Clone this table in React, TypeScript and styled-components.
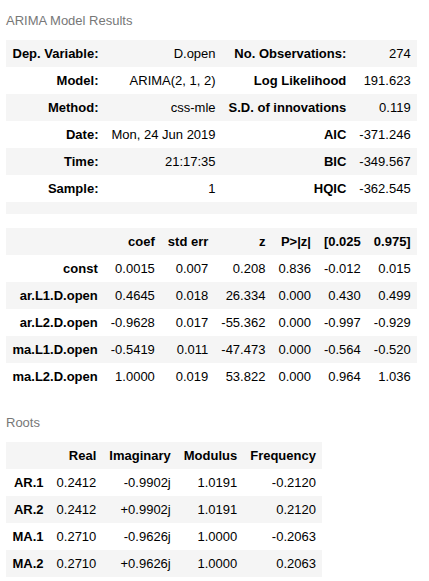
import React from "react"
import styled, { createGlobalStyle } from "styled-components"

const GlobalStyle = createGlobalStyle`
  body {
    margin: 0;
    background: #fff;
    color: #000;
    font-family: "Liberation Sans", Arial, sans-serif;
    font-size: 13px;
  }
`

const OutputArea = styled.div`
  display: flex;
  flex-direction: column;
  align-items: flex-start;
  padding-left: 6px;
`

const StatsTable = styled.table<{ gap: number }>`
  margin-top: ${({ gap }) => gap}px;
  border: none;
  border-collapse: collapse;
  border-spacing: 0;
  color: #000;
  font-size: 13px;
  table-layout: auto;

  tbody tr:nth-child(odd) {
    background: #f5f5f5;
  }
`

const Caption = styled.caption`
  caption-side: top;
  padding: 13px 0 12px;
  line-height: 15px;
  color: #777;
  text-align: left;
`

const Row = styled.tr<{ spacer?: boolean }>`
  height: ${({ spacer }) => (spacer ? "12px" : "27px")};
`

const HeadCell = styled.th`
  padding: 6px 6.5px;
  line-height: 15px;
  font-weight: bold;
  text-align: right;
  vertical-align: middle;
  white-space: nowrap;
  border: none;
`

const Cell = styled.td`
  padding: 6px 6.5px;
  line-height: 15px;
  text-align: right;
  vertical-align: middle;
  white-space: nowrap;
  border: none;
`

const SpacerCell = styled.td`
  padding: 0;
  border: none;
`

// model info: label, value, label, value
const modelInfo = [
  ["Dep. Variable:", "D.open", "No. Observations:", "274"],
  ["Model:", "ARIMA(2, 1, 2)", "Log Likelihood", "191.623"],
  ["Method:", "css-mle", "S.D. of innovations", "0.119"],
  ["Date:", "Mon, 24 Jun 2019", "AIC", "-371.246"],
  ["Time:", "21:17:35", "BIC", "-349.567"],
  ["Sample:", "1", "HQIC", "-362.545"],
]

const coefHeader = ["coef", "std err", "z", "P>|z|", "[0.025", "0.975]"]

const coefRows = [
  ["const", "0.0015", "0.007", "0.208", "0.836", "-0.012", "0.015"],
  ["ar.L1.D.open", "0.4645", "0.018", "26.334", "0.000", "0.430", "0.499"],
  ["ar.L2.D.open", "-0.9628", "0.017", "-55.362", "0.000", "-0.997", "-0.929"],
  ["ma.L1.D.open", "-0.5419", "0.011", "-47.473", "0.000", "-0.564", "-0.520"],
  ["ma.L2.D.open", "1.0000", "0.019", "53.822", "0.000", "0.964", "1.036"],
]

const rootHeader = ["Real", "Imaginary", "Modulus", "Frequency"]

const rootRows = [
  ["AR.1", "0.2412", "-0.9902j", "1.0191", "-0.2120"],
  ["AR.2", "0.2412", "+0.9902j", "1.0191", "0.2120"],
  ["MA.1", "0.2710", "-0.9626j", "1.0000", "-0.2063"],
  ["MA.2", "0.2710", "+0.9626j", "1.0000", "0.2063"],
]

const HeaderRow = ({ labels }: { labels: string[] }) => (
  <Row>
    <Cell />
    {labels.map((l) => (
      <HeadCell key={l}>{l}</HeadCell>
    ))}
  </Row>
)

const DataRow = ({ cells }: { cells: string[] }) => (
  <Row>
    <HeadCell>{cells[0]}</HeadCell>
    {cells.slice(1).map((c, i) => (
      <Cell key={i}>{c}</Cell>
    ))}
  </Row>
)

export default function App() {
  return (
    <>
      <GlobalStyle />
      <OutputArea>
        <StatsTable gap={0}>
          <Caption>ARIMA Model Results</Caption>
          <tbody>
            {modelInfo.map((r) => (
              <Row key={r[0]}>
                <HeadCell>{r[0]}</HeadCell>
                <Cell>{r[1]}</Cell>
                <HeadCell>{r[2]}</HeadCell>
                <Cell>{r[3]}</Cell>
              </Row>
            ))}
            <Row spacer>
              <SpacerCell />
              <SpacerCell />
              <SpacerCell />
              <SpacerCell />
            </Row>
          </tbody>
        </StatsTable>

        <StatsTable gap={14}>
          <tbody>
            <HeaderRow labels={coefHeader} />
            {coefRows.map((r) => (
              <DataRow key={r[0]} cells={r} />
            ))}
          </tbody>
        </StatsTable>

        <StatsTable gap={12}>
          <Caption>Roots</Caption>
          <tbody>
            <HeaderRow labels={rootHeader} />
            {rootRows.map((r) => (
              <DataRow key={r[0]} cells={r} />
            ))}
          </tbody>
        </StatsTable>
      </OutputArea>
    </>
  )
}
